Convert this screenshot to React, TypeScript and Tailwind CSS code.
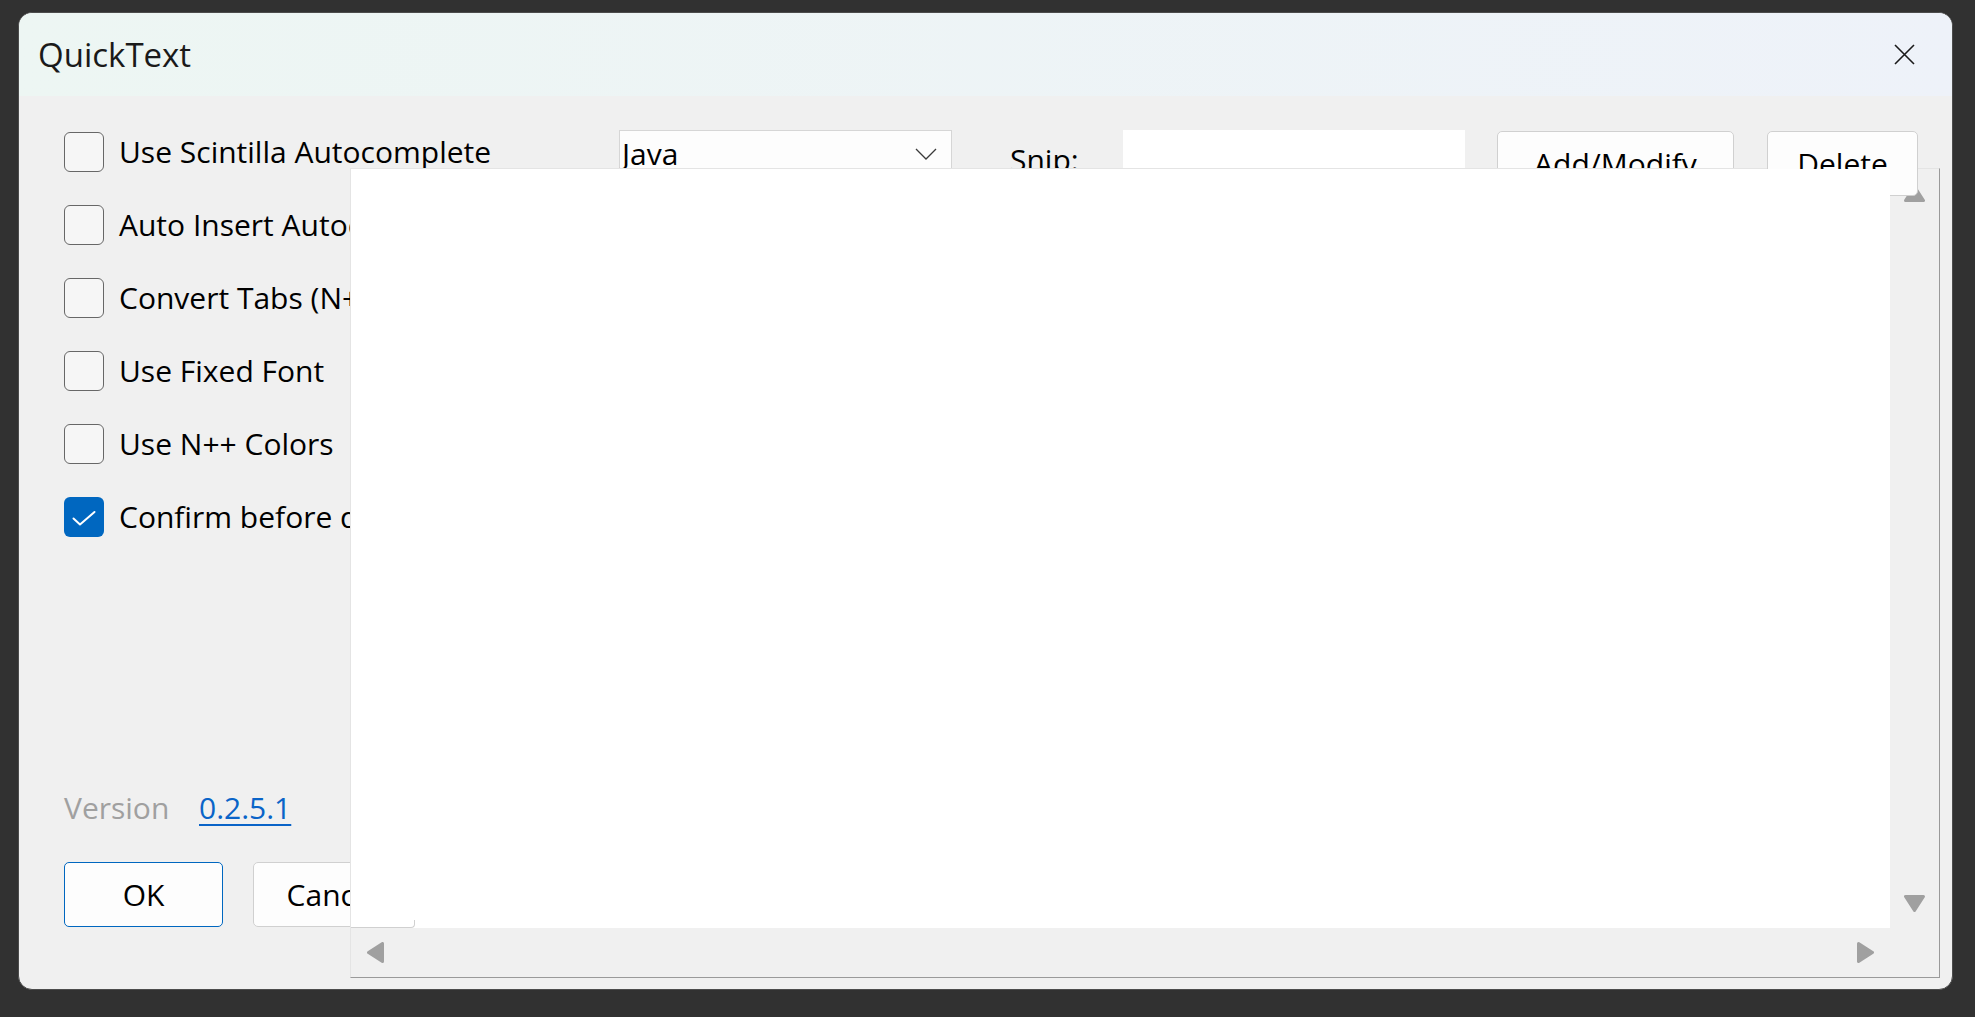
const options = [
  { label: "Use Scintilla Autocomplete", checked: false },
  { label: "Auto Insert Autocomplete", checked: false },
  { label: "Convert Tabs (N++ Settings)", checked: false },
  { label: "Use Fixed Font", checked: false },
  { label: "Use N++ Colors", checked: false },
  { label: "Confirm before deleting", checked: true },
];

function CheckBox({ checked }: { checked: boolean }) {
  if (checked) {
    return (
      <div className="w-[40px] h-[40px] shrink-0 rounded-[6px] bg-[#0067c0] flex items-center justify-center">
        <svg width="40" height="40" viewBox="0 0 40 40" fill="none">
          <path d="M9.5 21.5 L16 27.5 L30.5 15" stroke="white" strokeWidth="2" strokeLinecap="round" strokeLinejoin="round" />
        </svg>
      </div>
    );
  }
  return <div className="w-[40px] h-[40px] shrink-0 rounded-[6px] border-[1.5px] border-[#676767] bg-[#f6f6f6]" />;
}

function Arrow({ dir }: { dir: "up" | "down" | "left" | "right" }) {
  const vertical = dir === "up" || dir === "down";
  const d = {
    up: "M10.5 1.5 L19.5 15.5 L1.5 15.5 Z",
    down: "M1.5 1.5 L19.5 1.5 L10.5 15.5 Z",
    left: "M15.5 1.5 L15.5 19.5 L1.5 10.5 Z",
    right: "M1.5 1.5 L15.5 10.5 L1.5 19.5 Z",
  }[dir];
  return (
    <svg width={vertical ? 21 : 17} height={vertical ? 17 : 21} viewBox={vertical ? "0 0 21 17" : "0 0 17 21"}>
      <path d={d} fill="#a0a0a0" stroke="#a0a0a0" strokeWidth="3" strokeLinejoin="round" />
    </svg>
  );
}

export default function App() {
  return (
    <div className="w-full h-screen bg-[#313131] pt-[12px] pl-[18px] font-['Open_Sans',sans-serif] text-black overflow-hidden">
      <div className="relative w-[1935px] h-[978px] rounded-[14px] border border-[#4c4c4c] bg-[#f0f0f0] overflow-hidden">
        {/* Title bar */}
        <div className="h-[83px] flex items-center justify-between pl-[19px] pr-[37px] bg-gradient-to-r from-[#edf6f3] to-[#eef2f9]">
          <span className="text-[33px] leading-none text-[#1a1a1a]">QuickText</span>
          <svg width="21" height="21" viewBox="0 0 21 21" fill="none">
            <path d="M1 1 L20 20 M20 1 L1 20" stroke="#1a1a1a" strokeWidth="1.6" />
          </svg>
        </div>

        {/* Body */}
        <div className="flex">
          {/* Left column */}
          <div className="w-[600px] pl-[45px] pt-[36px] flex flex-col">
            <div className="flex flex-col gap-[33px]">
              {options.map((o) => (
                <div key={o.label} className="h-[40px] flex items-center gap-[15px]">
                  <CheckBox checked={o.checked} />
                  <span className="text-[30px] leading-[40px] whitespace-nowrap">{o.label}</span>
                </div>
              ))}
            </div>

            <div className="mt-[251px] h-[40px] flex items-center text-[30px] leading-[40px]">
              <span className="w-[135px] text-[#a0a0a0]">Version</span>
              <span className="text-[#0a64c8] underline underline-offset-[5px] decoration-[2px]">0.2.5.1</span>
            </div>

            <div className="mt-[34px] flex gap-[30px]">
              <button className="w-[159px] h-[65px] rounded-[5px] border-[1.5px] border-[#0067c0] bg-[#fdfdfd] text-[30px]">
                OK
              </button>
              <button className="w-[160px] h-[65px] rounded-[5px] border border-[#d0d0d0] bg-[#fdfdfd] text-[30px]">
                Cancel
              </button>
            </div>
          </div>

          {/* Top row on the right */}
          <div className="flex items-start">
            <div className="mt-[34px] w-[333px] h-[48px] border border-[#d6d6d6] bg-[#fdfdfd] flex items-center justify-between pl-[2px] pr-[14px]">
              <span className="text-[30px] leading-none">Java</span>
              <svg width="22" height="12" viewBox="0 0 22 12" fill="none">
                <path d="M1 1 L11 11 L21 1" stroke="#3a3a3a" strokeWidth="1.3" />
              </svg>
            </div>
            <span className="ml-[58px] mt-[44px] w-[113px] text-[30px] leading-[40px]">Snip:</span>
            <div className="mt-[34px] w-[342px] h-[48px] bg-white" />
            <button className="ml-[32px] mt-[35px] w-[237px] h-[65px] rounded-[5px] border border-[#d0d0d0] bg-[#fdfdfd] text-[30px]">
              Add/Modify
            </button>
            <button className="relative z-20 ml-[33px] mt-[35px] w-[151px] h-[65px] rounded-[5px] border border-[#d0d0d0] bg-[#fdfdfd] text-[30px]">
              Delete
            </button>
          </div>
        </div>

        {/* Overlaid editor window with scroll bars */}
        <div className="absolute left-[331px] top-[155px] w-[1590px] h-[810px] flex flex-col bg-[#f0f0f0] border-t border-l border-[#e4e4e4] border-r border-b border-r-[#9a9a9a] border-b-[#9a9a9a]">
          <div className="flex">
            <div className="relative z-30 w-[1539px] h-[759px] bg-white">
              <div className="absolute left-0 bottom-0 w-[64px] h-[8px] border-b border-r border-[#d0d0d0] rounded-br-[4px]" />
            </div>
            <div className="flex-1 flex flex-col items-center justify-between py-[16px]">
              <Arrow dir="up" />
              <Arrow dir="down" />
            </div>
          </div>
          <div className="w-[1539px] flex-1 flex items-center justify-between pl-[16px] pr-[16px]">
            <Arrow dir="left" />
            <Arrow dir="right" />
          </div>
        </div>
      </div>
    </div>
  );
}
